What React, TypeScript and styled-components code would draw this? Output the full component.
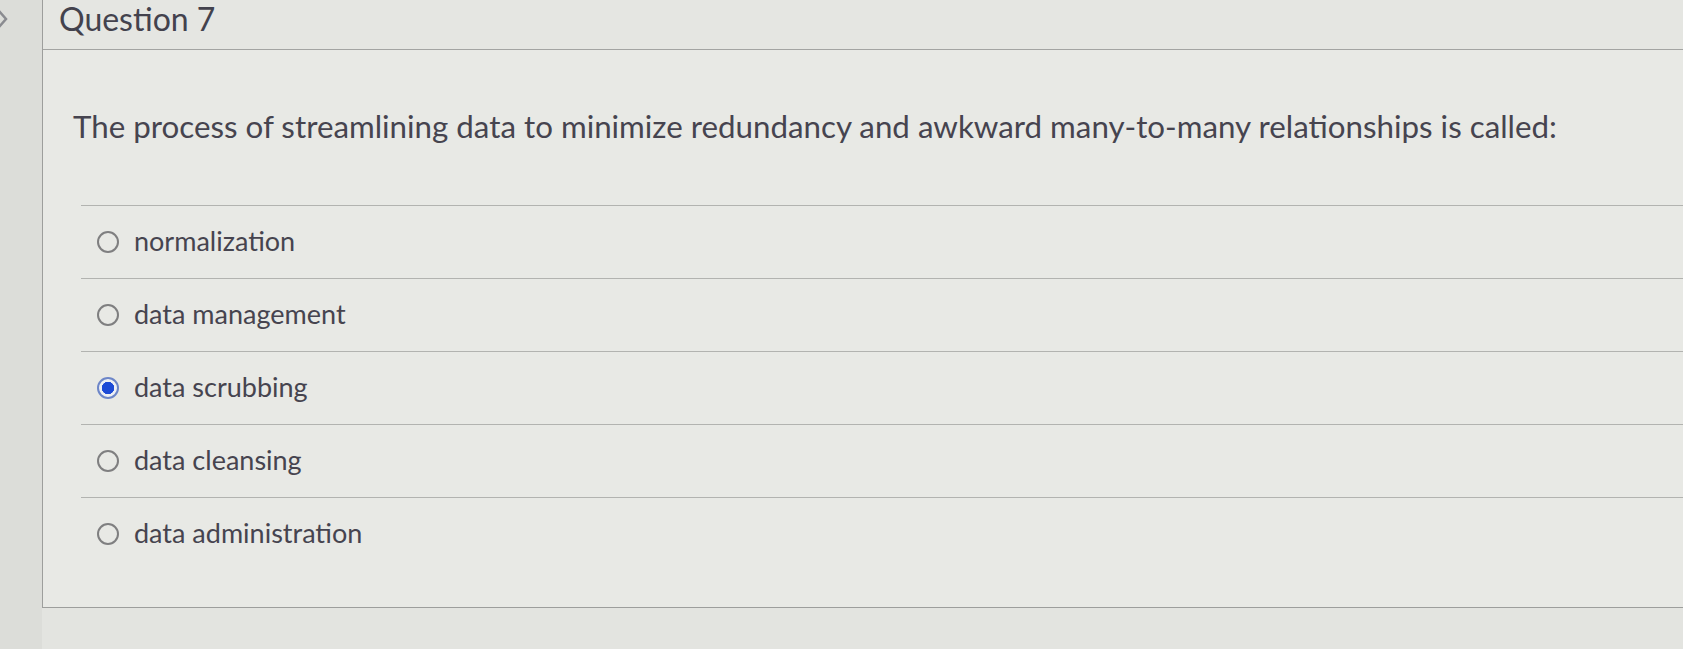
import React from "react";
import styled, { createGlobalStyle } from "styled-components";

const Global = createGlobalStyle`
  html, body { margin: 0; padding: 0; background: #e3e4e0; }
  body { font-family: Lato, "Open Sans", sans-serif; color: #46444f; overflow: hidden; }
`;

const Page = styled.div`
  display: flex;
  width: 1683px;
  height: 649px;
  background: #e3e4e0;
`;

const Gutter = styled.div`
  width: 42px;
  flex: none;
  background: #dcddd9;
  position: relative;
`;

const Chevron = styled.svg`
  position: absolute;
  left: -4px;
  top: 8px;
`;

const Panel = styled.section`
  flex: 1;
  height: 607px;
  border-left: 1.5px solid #9d9e9c;
  border-bottom: 1.5px solid #9d9e9c;
  background: #e8e9e5;
  display: flex;
  flex-direction: column;
`;

const Header = styled.header`
  height: 50px;
  box-sizing: border-box;
  border-bottom: 1.5px solid #a3a4a2;
  padding-left: 16px;
  background: #e5e6e2;
`;

const Title = styled.h2`
  margin: 0;
  font-size: 32px;
  line-height: 38px;
  font-weight: 400;
  color: #43424d;
`;

const Body = styled.div`
  flex: 1;
  display: flex;
  flex-direction: column;
`;

const Prompt = styled.p`
  margin: 58px 0 0 30px;
  font-size: 31.3px;
  line-height: 1.2;
  color: #46444f;
`;

const Options = styled.ul`
  list-style: none;
  margin: 59px 0 0 38px;
  padding: 0;
`;

const Row = styled.li`
  height: 73px;
  box-sizing: border-box;
  border-top: 1px solid #b2b3b0;
  display: flex;
  align-items: center;
  padding-left: 16px;
  gap: 15px;
`;

const Radio = styled.span<{ $checked?: boolean }>`
  width: 22px;
  height: 22px;
  box-sizing: border-box;
  border-radius: 50%;
  flex: none;
  border: 2px solid ${(p) => (p.$checked ? "#6d86c8" : "#7f7f80")};
  background: ${(p) =>
    p.$checked
      ? "radial-gradient(circle, #1d4bd6 0 6px, #eef0f4 6.5px 100%)"
      : "transparent"};
`;

const Label = styled.span`
  font-size: 27px;
  line-height: 1.2;
  color: #46444f;
`;

const options = [
  { text: "normalization" },
  { text: "data management" },
  { text: "data scrubbing", checked: true },
  { text: "data cleansing" },
  { text: "data administration" },
];

export default function App() {
  return (
    <>
      <Global />
      <Page>
        <Gutter>
          <Chevron width="14" height="22" viewBox="0 0 14 22">
            <path d="M3 3 L10 11 L3 19" fill="none" stroke="#8a8b90" strokeWidth="2.5" />
          </Chevron>
        </Gutter>
        <Panel>
          <Header>
            <Title>Question 7</Title>
          </Header>
          <Body>
            <Prompt>
              The process of streamlining data to minimize redundancy and awkward many-to-many relationships is called:
            </Prompt>
            <Options>
              {options.map((o) => (
                <Row key={o.text}>
                  <Radio $checked={o.checked} />
                  <Label>{o.text}</Label>
                </Row>
              ))}
            </Options>
          </Body>
        </Panel>
      </Page>
    </>
  );
}
